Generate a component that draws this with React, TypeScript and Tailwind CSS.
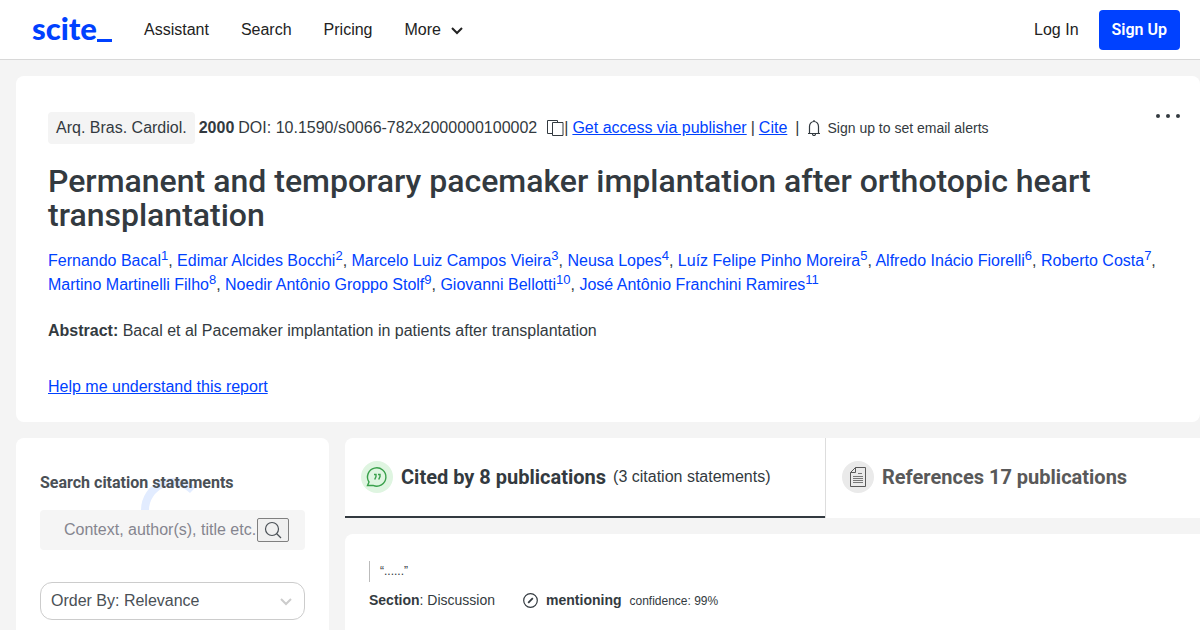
const navLinks = ["Assistant", "Search", "Pricing"];

const authors = [
  "Fernando Bacal",
  "Edimar Alcides Bocchi",
  "Marcelo Luiz Campos Vieira",
  "Neusa Lopes",
  "Luíz Felipe Pinho Moreira",
  "Alfredo Inácio Fiorelli",
  "Roberto Costa",
  "Martino Martinelli Filho",
  "Noedir Antônio Groppo Stolf",
  "Giovanni Bellotti",
  "José Antônio Franchini Ramires",
];

function Header() {
  return (
    <header className="flex h-15 shrink-0 items-center border-b border-[#d8d8d8] bg-white pr-5 pl-8 text-[#222]">
      <a href="#" className="mr-8 flex items-end text-[#0041ff]">
        <span className="mb-1 font-['Lato'] text-[31px] leading-7 font-black">scite</span>
        <span className="mb-1 h-[3px] w-[15px] bg-[#0041ff]" />
      </a>
      <nav className="flex items-center gap-8">
        {navLinks.map((link) => (
          <a key={link} href="#">
            {link}
          </a>
        ))}
        <button type="button" className="flex items-center gap-2">
          More
          <svg width="16" height="16" viewBox="0 0 16 16" fill="none" stroke="currentColor" strokeWidth="2">
            <path d="M3 6l5 5 5-5" />
          </svg>
        </button>
      </nav>
      <div className="ml-auto flex items-center gap-5">
        <a href="#">Log In</a>
        <a href="#" className="flex h-10 items-center rounded bg-[#0041ff] px-[13px] font-['Roboto'] font-semibold text-white">
          Sign Up
        </a>
      </div>
    </header>
  );
}

function Paper() {
  return (
    <section className="relative rounded-lg bg-white px-8 pt-9 pb-[23px]">
      <button type="button" aria-label="More options" className="absolute top-8 right-5">
        <svg width="24" height="16" viewBox="0 0 24 16" fill="#333a40">
          <circle cx="2" cy="8" r="2" />
          <circle cx="12" cy="8" r="2" />
          <circle cx="22" cy="8" r="2" />
        </svg>
      </button>

      <div className="flex h-8 items-center">
        <span className="mr-1 flex h-8 items-center rounded bg-[#f4f4f4] px-2">Arq. Bras. Cardiol.</span>
        <b className="mr-1">2000</b>
        <span>DOI: 10.1590/s0066-782x2000000100002</span>
        <button type="button" aria-label="Copy DOI" className="ml-2.5">
          <svg width="17" height="16" viewBox="0 0 17 16" fill="none" stroke="currentColor">
            <path d="M5.5 13.5h-5v-13h10v2" />
            <path d="M5.5 2.5h10.500v13H5.500z" />
          </svg>
        </button>
        <span className="mr-1">|</span>
        <a href="#" className="text-[#0041ff] underline">Get access via publisher</a>
        <span className="mx-1">|</span>
        <a href="#" className="text-[#0041ff] underline">Cite</a>
        <span className="mx-2">|</span>
        <button type="button" className="flex items-center gap-1.5 text-sm">
          <svg width="14" height="16" viewBox="0 0 14 16" fill="none" stroke="currentColor" strokeWidth="1.2">
            <path d="M7 1.500V0M1 13.500h12M2.500 13.500V6.500a4.500 5 0 0 1 9 0v7M5.500 14a1.500 1.500 0 0 0 3 0" />
          </svg>
          Sign up to set email alerts
        </button>
      </div>

      <h1 className="mt-5 font-['Roboto'] text-[32px] leading-[34px] font-medium">
        Permanent and temporary pacemaker implantation after orthotopic heart transplantation
      </h1>

      <p className="mt-[17px]">
        {authors.map((author, i) => (
          <span key={author}>
            <a href="#" className="text-[#0041ff]">
              {author}
              <sup className="text-[13px]">{i + 1}</sup>
            </a>
            {i < authors.length - 1 && ", "}
          </span>
        ))}
      </p>

      <p className="mt-5.5">
        <b>Abstract:</b> Bacal et al Pacemaker implantation in patients after transplantation
      </p>

      <a href="#" className="mt-8 block w-fit text-[#0041ff] underline">
        Help me understand this report
      </a>
    </section>
  );
}

function Sidebar() {
  return (
    <aside className="relative w-[313px] shrink-0 rounded-lg bg-white px-6 pt-[33px] text-[#4a5056]">
      <svg className="absolute top-10 left-[125px]" width="64" height="64" viewBox="0 0 64 64" fill="none" stroke="#e2ecff" strokeWidth="8">
        <path d="M4 32A28 28 0 0 1 51.800 12.200" />
      </svg>
      <form className="relative">
        <label htmlFor="search" className="block font-['Roboto'] font-bold">
          Search citation statements
        </label>
        <div className="mt-[15px] flex h-10 items-center rounded bg-[#f5f5f5] pr-4 pl-6">
          <input id="search" placeholder="Context, author(s), title etc." className="min-w-0 flex-1 outline-none placeholder:text-[#85858f]" />
          <button type="button" aria-label="Search" className="flex h-6 w-8 items-center justify-center rounded-[2px] border border-[#808080] bg-[#f0f0f0]">
            <svg width="18" height="18" viewBox="0 0 18 18" fill="none" stroke="#4a5056" strokeWidth="1.2">
              <circle cx="8" cy="8" r="6.500" />
              <path d="M12.500 12.500L17 17" />
            </svg>
          </button>
        </div>
        <div className="relative mt-8">
          <select aria-label="Order by" className="h-9.5 w-full appearance-none rounded-xl border border-[#ccc] bg-white px-2.5">
            <option>Order By: Relevance</option>
          </select>
          <svg className="pointer-events-none absolute top-3 right-3" width="14" height="14" viewBox="0 0 14 14" fill="none" stroke="#ccc" strokeWidth="2">
            <path d="M2 5l5 5 5-5" />
          </svg>
        </div>
      </form>
    </aside>
  );
}

function Tabs() {
  return (
    <div className="flex h-20 rounded-tl-lg bg-white font-['Roboto']">
      <button type="button" className="flex w-[480px] shrink-0 items-center gap-2 border-b-2 border-[#333a40] px-4">
        <svg width="32" height="32" viewBox="0 0 32 32" fill="none" stroke="#39a04b" strokeWidth="1.400">
          <circle cx="16" cy="16" r="16" fill="#dff5e1" stroke="none" />
          <path d="M6.500 24.500l1.500-3.500A9.200 9.200 0 1 1 12 24.400z" />
          <path d="M13 13.500h2v2l-1.300 3M17 13.500h2v2l-1.300 3" strokeWidth="1.400" />
        </svg>
        <span className="text-xl font-bold">Cited by 8 publications</span>
        <span className="-ml-px font-['Liberation_Sans']">(3 citation statements)</span>
      </button>
      <button type="button" className="flex min-w-0 flex-1 items-center gap-2 border-l border-[#ddd] px-4 pb-0.5 text-[#595959]">
        <svg className="shrink-0" width="32" height="32" viewBox="0 0 32 32" fill="none" stroke="#595959">
          <circle cx="16" cy="16" r="16" fill="#eaeaea" stroke="none" />
          <path d="M13.500 6.500h10v19h-15v-14zM8.500 11.500h5v-5" />
          <path d="M16 12.500h4M11 15.500h10M11 17.500h10M11 19.500h10M11 21.500h10" stroke="#777" />
        </svg>
        <span className="text-xl font-bold whitespace-nowrap">References 17 publications</span>
      </button>
    </div>
  );
}

function Statement() {
  return (
    <article className="mt-4 flex-1 rounded-tl-lg bg-white px-6 pt-[27px] pb-8 text-sm">
      <blockquote className="border-l border-[#bbb] pl-2.5 text-xs leading-[21px]">“......”</blockquote>
      <div className="mt-2 flex items-center leading-[21px]">
        <b>Section</b>: Discussion
        <svg className="mr-2 ml-7" width="15" height="15" viewBox="0 0 15 15" fill="none" stroke="currentColor" strokeWidth="1.200">
          <circle cx="7.500" cy="7.500" r="6.800" />
          <path d="M5.200 9.800l4.600-4.600" strokeWidth="1.800" />
        </svg>
        <b>mentioning</b>
        <span className="ml-2 text-xs">confidence: 99%</span>
      </div>
    </article>
  );
}

export default function App() {
  return (
    <div className="flex h-screen flex-col overflow-hidden bg-[#f4f4f4] font-['Liberation_Sans',sans-serif] text-[#333a40]">
      <Header />
      <main className="flex flex-1 flex-col pt-4 pl-4">
        <Paper />
        <div className="mt-4 flex flex-1 gap-4">
          <Sidebar />
          <div className="flex min-w-0 flex-1 flex-col">
            <Tabs />
            <Statement />
          </div>
        </div>
      </main>
    </div>
  );
}
